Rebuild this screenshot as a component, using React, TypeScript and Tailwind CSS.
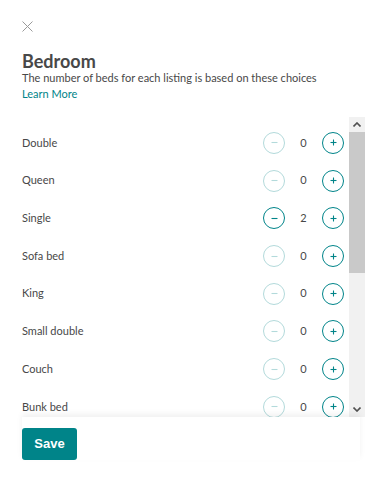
import React, { useState } from "react";

const BEDS: [string, number][] = [
  ["Double", 0],
  ["Queen", 0],
  ["Single", 2],
  ["Sofa bed", 0],
  ["King", 0],
  ["Small double", 0],
  ["Couch", 0],
  ["Bunk bed", 0],
  ["Floor mattress", 0],
  ["Air mattress", 0],
  ["Crib", 0],
  ["Toddler bed", 0],
  ["Hammock", 0],
  ["Water bed", 0],
];

function Minus({ enabled }: { enabled: boolean }) {
  return (
    <button
      className={
        "flex h-[22px] w-[22px] items-center justify-center rounded-full border " +
        (enabled ? "border-[#008489]" : "border-[#b3dadb]")
      }
    >
      <svg width="7" height="7" viewBox="0 0 7 7">
        <line x1="0.5" y1="3.5" x2="6.5" y2="3.5" stroke={enabled ? "#008489" : "#b3dadb"} strokeWidth="1.1" />
      </svg>
    </button>
  );
}

function Plus() {
  return (
    <button className="flex h-[22px] w-[22px] items-center justify-center rounded-full border border-[#008489]">
      <svg width="7" height="7" viewBox="0 0 7 7">
        <line x1="0.5" y1="3.5" x2="6.5" y2="3.5" stroke="#008489" strokeWidth="1.1" />
        <line x1="3.5" y1="0.5" x2="3.5" y2="6.5" stroke="#008489" strokeWidth="1.1" />
      </svg>
    </button>
  );
}

function Scrollbar() {
  return (
    <div className="flex h-full w-[16px] shrink-0 flex-col bg-[#f1f1f1]">
      <div className="flex h-[15px] items-center justify-center">
        <svg width="8" height="5" viewBox="0 0 8 5">
          <path d="M0.5 4.5 L4 1 L7.5 4.5" fill="none" stroke="#505050" strokeWidth="1.6" />
        </svg>
      </div>
      <div className="flex-1">
        <div className="h-[141px] bg-[#c9c9c9]" />
      </div>
      <div className="flex h-[15px] items-center justify-center">
        <svg width="8" height="5" viewBox="0 0 8 5">
          <path d="M0.5 0.5 L4 4 L7.5 0.5" fill="none" stroke="#505050" strokeWidth="1.6" />
        </svg>
      </div>
    </div>
  );
}

export default function App() {
  const [counts] = useState(BEDS);
  return (
    <div
      className="flex h-[479px] w-[378px] flex-col overflow-hidden bg-white text-[#484848]"
      style={{ fontFamily: "Lato, 'Noto Sans', sans-serif" }}
    >
      <div className="px-[22px] pt-[21px]">
        <svg className="block" width="11" height="11" viewBox="0 0 11 11">
          <line x1="0.5" y1="0.5" x2="10.5" y2="10.5" stroke="#9a9a9a" strokeWidth="1" />
          <line x1="10.5" y1="0.5" x2="0.5" y2="10.5" stroke="#9a9a9a" strokeWidth="1" />
        </svg>
        <h1 className="mt-[18px] text-[18px] font-bold leading-[22px] text-[#484848]">Bedroom</h1>
        <p className="mt-[-2px] text-[11px] leading-[16px]">
          The number of beds for each listing is based on these choices
        </p>
        <a className="block text-[11px] leading-[15px] text-[#008489]">Learn More</a>
      </div>
      <div className="mr-[13px] mt-[16px] flex h-[300px] shrink-0">
        <div className="h-full flex-1 overflow-hidden pl-[22px] pr-[5px]">
          <div className="pb-[43px] pt-[7px]">
            {counts.map(([name, n]) => (
              <div key={name} className="flex h-[37.72px] items-center justify-between">
                <span className="text-[11px]">{name}</span>
                <div className="flex items-center">
                  <Minus enabled={n > 0} />
                  <span className="w-[37px] text-center text-[11px]">{n}</span>
                  <Plus />
                </div>
              </div>
            ))}
          </div>
        </div>
        <Scrollbar />
      </div>
      <div className="relative ml-[22px] mr-[18px] pt-[11px] shadow-[0_-3px_6px_rgba(0,0,0,0.06)]">
        <button
          className="h-[32px] w-[55px] rounded-[3px] bg-[#008489] text-[13px] font-bold text-white"
          style={{ fontFamily: "'Liberation Sans', Arial, sans-serif" }}
        >
          Save
        </button>
      </div>
    </div>
  );
}
